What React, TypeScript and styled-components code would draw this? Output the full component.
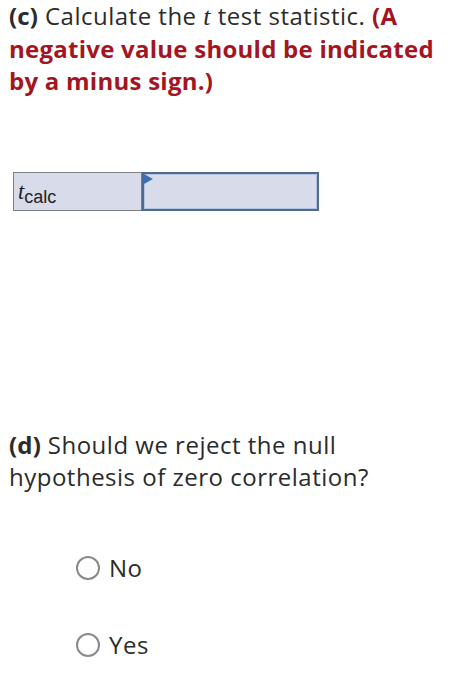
import React from "react";
import styled, { createGlobalStyle } from "styled-components";

const Global = createGlobalStyle`
  html, body { margin: 0; padding: 0; background: #fff; }
  body { font-family: "Open Sans", "Lato", sans-serif; color: #2b2b2b; }
`;

const Page = styled.div`
  width: 464px;
  padding: 0 9px;
  box-sizing: border-box;
`;

const Prompt = styled.p`
  margin: 0;
  font-size: 24px;
  line-height: 32px;
  letter-spacing: 0.5px;
`;

const Label = styled.b`
  font-weight: 700;
  letter-spacing: 0.2px;
`;

const Warn = styled.b`
  font-weight: 700;
  color: #a3151f;
  letter-spacing: 0.25px;
`;

const Var = styled.i`
  font-family: "Liberation Serif", serif;
  font-style: italic;
  font-size: 1.08em;
`;

const AnswerTable = styled.div`
  display: grid;
  width: 306px;
  grid-template-columns: 129px 177px;
  height: 39px;
  margin: 75px 0 0 4px;
  background: #d8dbe9;
`;

const LabelCell = styled.div`
  border: 1.5px solid #7d7f86;
  display: flex;
  align-items: center;
  padding-left: 4px;
  font-family: "Liberation Sans", Arial, sans-serif;
  font-size: 21px;
  color: #222;
`;

const Sub = styled.span`
  font-size: 18px;
  position: relative;
  top: 6px;
`;

const InputCell = styled.div`
  position: relative;
  border: 2.5px solid #4d6a93;
  border-left-width: 2px;
  box-shadow: inset 0 0 0 1px #b7c3dd;
`;

const Marker = styled.svg`
  position: absolute;
  left: 0;
  top: 0;
`;

const Section = styled.div`
  margin-top: 218px;
`;

const Options = styled.div`
  display: flex;
  flex-direction: column;
  gap: 51px;
  margin: 62px 0 0 67px;
`;

const Option = styled.label`
  display: flex;
  align-items: center;
  gap: 9px;
  font-size: 24px;
  line-height: 26px;
  letter-spacing: 0.5px;
  color: #2b2b2b;
`;

const Radio = styled.span`
  width: 20px;
  height: 20px;
  border-radius: 50%;
  border: 2.5px solid #8a8a8a;
  flex: none;
`;

export default function App() {
  return (
    <Page>
      <Global />
      <Prompt>
        <Label>(c)</Label> Calculate the <Var>t</Var> test statistic.{" "}
        <Warn>(A negative value should be indicated by a minus sign.)</Warn>
      </Prompt>
      <AnswerTable>
        <LabelCell>
          <Var>t</Var>
          <Sub>calc</Sub>
        </LabelCell>
        <InputCell>
          <Marker width="9" height="10" viewBox="0 0 9 10">
            <path d="M0 0 L9 5 L0 10 Z" fill="#3b6fb0" />
          </Marker>
        </InputCell>
      </AnswerTable>
      <Section>
        <Prompt>
          <Label>(d)</Label> Should we reject the null hypothesis of zero correlation?
        </Prompt>
        <Options>
          <Option>
            <Radio />
            No
          </Option>
          <Option>
            <Radio />
            Yes
          </Option>
        </Options>
      </Section>
    </Page>
  );
}
